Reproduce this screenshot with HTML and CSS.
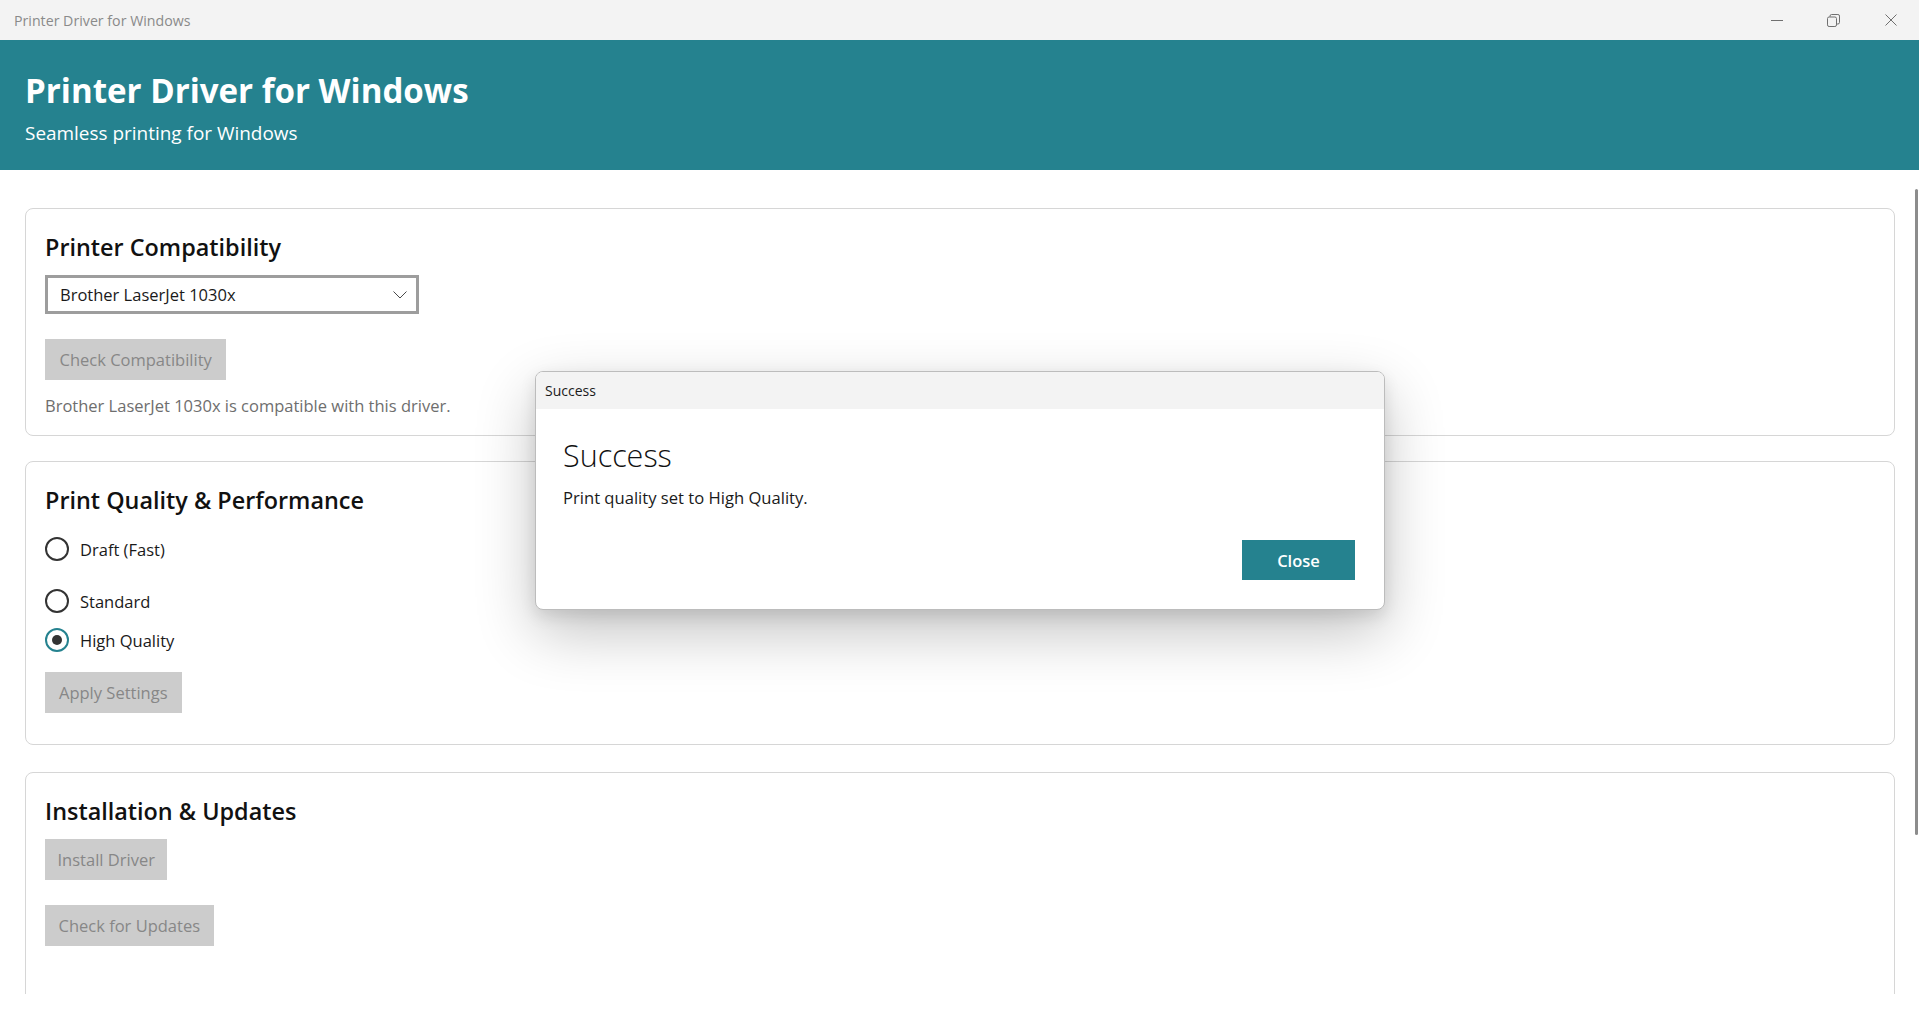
FILE: index.html
```html
<!DOCTYPE html>
<html lang="en">
<head>
<meta charset="utf-8">
<title>Printer Driver for Windows</title>
<link rel="stylesheet" href="styles.css">
</head>
<body>
<div class="window">
  <div class="titlebar">
    <span class="titlebar-title">Printer Driver for Windows</span>
    <div class="caption-buttons">
      <button class="caption-btn" aria-label="Minimize">
        <svg width="12" height="12" viewBox="0 0 12 12"><path d="M0 6.5H12" stroke="#6f6f6f" stroke-width="1" fill="none"/></svg>
      </button>
      <button class="caption-btn" aria-label="Restore">
        <svg width="13" height="13" viewBox="0 0 13 13" fill="none" stroke="#6f6f6f" stroke-width="1">
          <rect x="0.5" y="3" width="9" height="9.5" rx="1.6"/>
          <path d="M3 2.8V2.1A1.6 1.6 0 0 1 4.6 0.5H10.9A1.6 1.6 0 0 1 12.5 2.1V8.4A1.6 1.6 0 0 1 10.9 10H9.7"/>
        </svg>
      </button>
      <button class="caption-btn" aria-label="Close">
        <svg width="12" height="12" viewBox="0 0 12 12" fill="none" stroke="#6f6f6f" stroke-width="1"><path d="M0.5 0.5L11.5 11.5M11.5 0.5L0.5 11.5"/></svg>
      </button>
    </div>
  </div>

  <header class="hero">
    <h1 class="hero-title">Printer Driver for Windows</h1>
    <p class="hero-subtitle">Seamless printing for Windows</p>
  </header>

  <main class="content">
    <section class="card card-compat">
      <h2 class="card-title">Printer Compatibility</h2>
      <div class="select">
        <span class="select-value">Brother LaserJet 1030x</span>
        <svg class="select-chevron" width="14" height="8" viewBox="0 0 14 8" fill="none" stroke="#4a4a4a" stroke-width="1"><path d="M0.5 0.5L7 7L13.5 0.5"/></svg>
      </div>
      <button class="btn btn-disabled btn-check">Check Compatibility</button>
      <p class="status-text">Brother LaserJet 1030x is compatible with this driver.</p>
    </section>

    <section class="card card-quality">
      <h2 class="card-title">Print Quality &amp; Performance</h2>
      <label class="radio radio-draft"><span class="radio-circle"></span><span class="radio-label">Draft (Fast)</span></label>
      <label class="radio radio-standard"><span class="radio-circle"></span><span class="radio-label">Standard</span></label>
      <label class="radio radio-high radio-checked"><span class="radio-circle"><span class="radio-dot"></span></span><span class="radio-label">High Quality</span></label>
      <button class="btn btn-disabled btn-apply">Apply Settings</button>
    </section>

    <section class="card card-install">
      <h2 class="card-title">Installation &amp; Updates</h2>
      <button class="btn btn-disabled btn-install">Install Driver</button>
      <button class="btn btn-disabled btn-updates">Check for Updates</button>
    </section>
  </main>

  <div class="scrollbar-thumb"></div>

  <div class="dialog" role="dialog">
    <div class="dialog-header">Success</div>
    <div class="dialog-body">
      <h3 class="dialog-title">Success</h3>
      <p class="dialog-message">Print quality set to High Quality.</p>
      <div class="dialog-footer">
        <button class="btn btn-primary">Close</button>
      </div>
    </div>
  </div>
</div>
</body>
</html>
```

FILE: styles.css
```css
* {
  box-sizing: border-box;
}

html,
body {
  margin: 0;
  padding: 0;
}

body {
  width: 1919px;
  height: 1009px;
  overflow: hidden;
  background: #ffffff;
  color: #141414;
  font-family: "Open Sans", "Noto Sans", "DejaVu Sans", sans-serif;
}

.window {
  position: relative;
  width: 1919px;
  height: 1009px;
  display: flex;
  flex-direction: column;
  overflow: hidden;
}

/* Title bar */
.titlebar {
  flex: none;
  height: 40px;
  background: #f3f3f3;
  display: flex;
  align-items: center;
  justify-content: space-between;
}

.titlebar-title {
  padding-left: 14px;
  font-size: 14.2px;
  color: #8a8a8a;
}

.caption-buttons {
  display: flex;
  height: 100%;
}

.caption-btn {
  width: 57px;
  height: 40px;
  padding: 0;
  border: 0;
  background: transparent;
  display: flex;
  align-items: center;
  justify-content: center;
}

/* Header */
.hero {
  flex: none;
  height: 130px;
  background: #25828f;
  color: #ffffff;
  padding: 29px 25px 0 25px;
}

.hero-title {
  margin: 0;
  font-size: 33.1px;
  font-weight: 700;
  line-height: 44px;
}

.hero-subtitle {
  margin: 7px 0 0;
  font-size: 18.95px;
  line-height: 26px;
}

/* Content */
.content {
  flex: 1;
  overflow: hidden;
  margin-bottom: 15px;
  padding: 38px 24px 0 25px;
  display: flex;
  flex-direction: column;
}

.card {
  flex: none;
  border: 1px solid #d6d6d6;
  border-radius: 8px;
  padding: 22px 20px 0 19px;
  display: flex;
  flex-direction: column;
  align-items: flex-start;
}

.card-compat {
  padding-bottom: 17px;
  margin-bottom: 25px;
}

.card-quality {
  padding-bottom: 31px;
  margin-bottom: 27px;
}

.card-install {
  min-height: 320px;
}

.card-title {
  margin: 0;
  font-size: 23.4px;
  font-weight: 600;
  line-height: 32px;
  color: #111111;
}

.select {
  margin-top: 12px;
  width: 374px;
  height: 39px;
  border: 3px solid #9d9d9d;
  background: #ffffff;
  display: flex;
  align-items: center;
  justify-content: space-between;
  padding: 0 9px 0 12px;
}

.select-value {
  font-size: 16.5px;
  color: #1a1a1a;
}

.btn {
  border: 0;
  font-family: inherit;
  font-size: 16.5px;
  height: 41px;
  padding: 0 13.5px;
  cursor: default;
}

.btn-disabled {
  background: #cccccc;
  color: #878787;
}

.btn-check {
  margin-top: 25px;
  padding: 0 14.5px;
}

.btn-apply {
  margin-top: 20px;
  padding: 0 14px;
}

.status-text {
  margin: 14px 0 0;
  font-size: 16.5px;
  line-height: 24px;
  color: #6e6e6e;
}

.radio {
  display: flex;
  align-items: center;
  gap: 11px;
  height: 24px;
  font-size: 16.5px;
  color: #1a1a1a;
}

.radio-draft {
  margin-top: 21px;
}

.radio-standard {
  margin-top: 28px;
}

.radio-high {
  margin-top: 15px;
}

.radio-circle {
  flex: none;
  width: 24px;
  height: 24px;
  border: 2px solid #333333;
  border-radius: 50%;
  display: flex;
  align-items: center;
  justify-content: center;
}

.radio-checked .radio-circle {
  border: 2.5px solid #25828f;
}

.radio-dot {
  width: 10px;
  height: 10px;
  border-radius: 50%;
  background: #333333;
}

.btn-install {
  margin-top: 12px;
  padding: 0 12.5px;
}

.btn-updates {
  margin-top: 25px;
}

/* Overlay scrollbar */
.scrollbar-thumb {
  position: absolute;
  right: 1px;
  top: 189px;
  width: 3px;
  height: 646px;
  border-radius: 2px;
  background: #8c8c8c;
}

/* Dialog */
.dialog {
  position: absolute;
  left: 535px;
  top: 371px;
  width: 850px;
  height: 239px;
  background: #ffffff;
  border: 1px solid #bcbcbc;
  border-radius: 8px;
  overflow: hidden;
  display: flex;
  flex-direction: column;
  box-shadow: 0 22px 60px rgba(0, 0, 0, 0.24), 0 6px 16px rgba(0, 0, 0, 0.1);
}

.dialog-header {
  flex: none;
  height: 37px;
  background: #f3f3f3;
  padding-left: 9px;
  display: flex;
  align-items: center;
  font-size: 14px;
  color: #1a1a1a;
}

.dialog-body {
  flex: 1;
  padding: 24px 29px 0 27px;
  display: flex;
  flex-direction: column;
}

.dialog-title {
  margin: 0;
  font-size: 30.5px;
  font-weight: 300;
  line-height: 44px;
  color: #111111;
}

.dialog-message {
  margin: 9px 0 0;
  font-size: 16.6px;
  line-height: 24px;
  color: #1a1a1a;
}

.dialog-footer {
  margin-top: 30px;
  display: flex;
  justify-content: flex-end;
}

.btn-primary {
  width: 113px;
  height: 40px;
  padding: 0;
  background: #25828f;
  color: #ffffff;
  font-weight: 600;
  font-size: 16.5px;
}
```
